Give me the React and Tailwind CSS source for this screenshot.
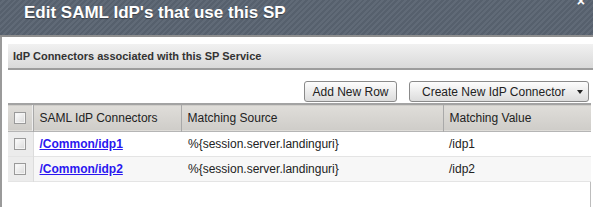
import React from "react";

function Check() {
  return (
    <span className="block w-[12px] h-[12px] border border-[#9a9a9a] bg-[linear-gradient(135deg,#ffffff,#d9d9d9)] shadow-[inset_0_0_0_1px_#f4f4f4]" />
  );
}

export default function App() {
  const rows = [
    { name: "/Common/idp1", src: "%{session.server.landinguri}", val: "/idp1", bg: "bg-white" },
    { name: "/Common/idp2", src: "%{session.server.landinguri}", val: "/idp2", bg: "bg-[#f7f7f7]" },
  ];
  return (
    <div className="w-[593px] h-[207px] overflow-hidden bg-white flex flex-col font-['Liberation_Sans',Arial,sans-serif]">
      <div className="relative h-[37px] shrink-0 border-b-2 border-[#8e8e8e] bg-[repeating-linear-gradient(135deg,#56606d_0px,#56606d_2px,#606a77_2px,#606a77_4px)] flex items-start pl-[24px] pt-[3px]">
        <span className="text-white font-bold text-[17px] leading-[20px] [text-shadow:0_1px_1px_rgba(0,0,0,0.4)]">
          Edit SAML IdP's that use this SP
        </span>
        <span className="absolute right-[8px] top-[-6px] text-white font-bold text-[14px] leading-[14px]">×</span>
      </div>
      <div className="flex-1 border-l-2 border-[#9a9a9a] pl-[6px] pt-[7px] flex flex-col">
        <div className="h-[26px] shrink-0 border-b-2 border-[#9c9c9c] bg-[linear-gradient(#f1f1f1,#d9d9d9)] flex items-center pl-[5px] pt-[1px]">
          <span className="text-[11px] font-bold text-[#333]">IdP Connectors associated with this SP Service</span>
        </div>
        <div className="flex justify-end gap-[12px] pr-[4px] pt-[11px] pb-[1px]">
          <button className="w-[93px] h-[21px] rounded-[3px] border border-[#8a8a8a] bg-[linear-gradient(#fdfdfd,#dcdcdc)] text-[12px] text-[#222] leading-none">
            Add New Row
          </button>
          <button className="w-[180px] h-[21px] rounded-[3px] border border-[#8a8a8a] bg-[linear-gradient(#fdfdfd,#dcdcdc)] text-[12px] text-[#222] leading-none flex items-center pl-[12px] pr-[5px]">
            <span className="flex-1 text-left">Create New IdP Connector</span>
            <span className="w-0 h-0 border-l-[3px] border-r-[3px] border-t-[4px] border-l-transparent border-r-transparent border-t-[#222]" />
          </button>
        </div>
        <div className="w-[583px] flex-1 border-r border-[#bdbdbd]">
          <table className="w-[583px] border-collapse text-[12px] text-[#222] table-fixed">
            <colgroup>
              <col className="w-[25px]" />
              <col className="w-[148px]" />
              <col className="w-[262px]" />
              <col className="w-[148px]" />
            </colgroup>
            <thead>
              <tr className="h-[27px] bg-[linear-gradient(#dfddd9,#cfcdc9)] border-t-2 border-[#a3a3a3] border-b border-b-[#b5b5b5]">
                <th className="border-r border-[#a9a9a9] shadow-[inset_-1px_0_0_#eeeeee] p-0">
                  <div className="flex justify-center"><Check /></div>
                </th>
                <th className="border-r border-[#a9a9a9] text-left font-normal pl-[6px]">SAML IdP Connectors</th>
                <th className="border-r border-[#a9a9a9] text-left font-normal pl-[6px]">Matching Source</th>
                <th className="text-left font-normal pl-[6px]">Matching Value</th>
              </tr>
            </thead>
            <tbody>
              {rows.map((r) => (
                <tr key={r.name} className={`h-[25px] ${r.bg} border-b border-[#e4e4e4]`}>
                  <td className="bg-[#ececec] border-r border-[#dcdcdc] p-0">
                    <div className="flex justify-center"><Check /></div>
                  </td>
                  <td className="pl-[6px]">
                    <a href="#" className="font-bold text-[#2a17f0] underline">{r.name}</a>
                  </td>
                  <td className="pl-[7px]">{r.src}</td>
                  <td className="pl-[6px]">{r.val}</td>
                </tr>
              ))}
            </tbody>
          </table>
        </div>
      </div>
    </div>
  );
}
